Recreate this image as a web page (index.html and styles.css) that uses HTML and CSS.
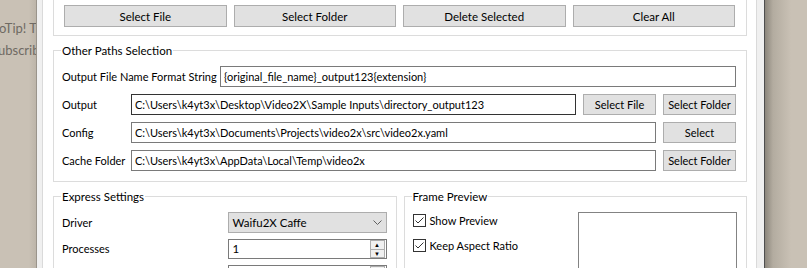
FILE: index.html
```html
<!DOCTYPE html>
<html lang="en">
<head>
    <meta charset="UTF-8">
    <meta name="viewport" content="width=device-width, initial-scale=1.0">
    <title>Video2X</title>
    <link rel="stylesheet" href="styles.css">
</head>
<body>
    <div class="desk">
        <div class="behind">
            <p class="behind-line tip">oTip! The</p>
            <p class="behind-line sub">ubscribe</p>
        </div>

        <div class="window">
            <div class="pane">
                <div class="group group-top">
                    <div class="btn-grid">
                        <button class="btn">Select File</button>
                        <button class="btn">Select Folder</button>
                        <button class="btn">Delete Selected</button>
                        <button class="btn">Clear All</button>
                    </div>
                </div>

                <div class="group paths">
                    <div class="group-title">Other Paths Selection</div>
                    <div class="rows">
                        <div class="row">
                            <span class="label label-wide">Output File Name Format String</span>
                            <input class="field" type="text" value="{original_file_name}_output123{extension}" readonly>
                        </div>
                        <div class="row">
                            <span class="label">Output</span>
                            <input class="field field-active" type="text" value="C:\Users\k4yt3x\Desktop\Video2X\Sample Inputs\directory_output123" readonly>
                            <button class="btn btn-small">Select File</button>
                            <button class="btn btn-small">Select Folder</button>
                        </div>
                        <div class="row">
                            <span class="label">Config</span>
                            <input class="field" type="text" value="C:\Users\k4yt3x\Documents\Projects\video2x\src\video2x.yaml" readonly>
                            <button class="btn btn-small">Select</button>
                        </div>
                        <div class="row">
                            <span class="label">Cache Folder</span>
                            <input class="field" type="text" value="C:\Users\k4yt3x\AppData\Local\Temp\video2x" readonly>
                            <button class="btn btn-small">Select Folder</button>
                        </div>
                    </div>
                </div>

                <div class="bottom">
                    <div class="group express">
                        <div class="group-title">Express Settings</div>
                        <div class="form">
                            <span class="label">Driver</span>
                            <div class="combo">
                                <span>Waifu2X Caffe</span>
                                <svg class="chevron" width="9" height="5" viewBox="0 0 9 5"><polyline points="0.5,0.5 4.5,4.5 8.5,0.5" fill="none" stroke="#606060" stroke-width="1"/></svg>
                            </div>

                            <span class="label">Processes</span>
                            <div class="spin">
                                <span class="spin-value">1</span>
                                <div class="spin-btns">
                                    <span class="spin-btn">&#9650;</span>
                                    <span class="spin-btn">&#9660;</span>
                                </div>
                            </div>

                            <span class="label"></span>
                            <div class="spin">
                                <span class="spin-value"></span>
                                <div class="spin-btns">
                                    <span class="spin-btn">&#9650;</span>
                                    <span class="spin-btn">&#9660;</span>
                                </div>
                            </div>
                        </div>
                    </div>

                    <div class="group preview">
                        <div class="group-title">Frame Preview</div>
                        <div class="form">
                            <div class="checks">
                                <div class="check">
                                    <svg width="13" height="13" viewBox="0 0 13 13"><rect x="0.5" y="0.5" width="12" height="12" fill="#fff" stroke="#333"/><polyline points="2.5,6.5 5,9 10.5,3.5" fill="none" stroke="#333" stroke-width="1"/></svg>
                                    <span>Show Preview</span>
                                </div>
                                <div class="check">
                                    <svg width="13" height="13" viewBox="0 0 13 13"><rect x="0.5" y="0.5" width="12" height="12" fill="#fff" stroke="#333"/><polyline points="2.5,6.5 5,9 10.5,3.5" fill="none" stroke="#333" stroke-width="1"/></svg>
                                    <span>Keep Aspect Ratio</span>
                                </div>
                            </div>
                            <div class="preview-box"></div>
                        </div>
                    </div>
                </div>
            </div>
        </div>

        <div class="outside"></div>
    </div>
</body>
</html>
```

FILE: styles.css
```css
body {
    margin: 0;
    height: 268px;
    overflow: hidden;
    background: #c9c1b5;
    font-family: 'Lato', 'Liberation Sans', sans-serif;
    font-size: 11px;
    color: #000;
}

.desk {
    display: flex;
    height: 268px;
}

.behind {
    width: 36px;
    overflow: hidden;
    padding-top: 18px;
    background: linear-gradient(to right, #c9c1b5 80%, #bdb5a9);
}

.behind-line {
    margin: 0;
    white-space: nowrap;
    font-size: 13px;
    line-height: 20px;
    color: #6f6a63;
}

.tip {
    margin-left: -1px;
}

.sub {
    margin-left: -2px;
    margin-top: 2px;
}

.window {
    width: 729px;
    box-sizing: border-box;
    background: #f0f0f0;
    border-left: 1px solid #9a948b;
    border-right: 1px solid #4e4e4e;
    padding: 0 7px 0 5px;
}

.pane {
    height: 100%;
    background: #fff;
    border-left: 1px solid #dadada;
    border-right: 1px solid #dadada;
    padding: 0 9px 0 10px;
}

.outside {
    flex: 1;
    background: linear-gradient(to right, #8c867c, #b3aca0 8px, #c9c1b5 26px);
}

.group {
    border: 1px solid #dcdcdc;
}

.group-title {
    width: fit-content;
    margin: -8px 0 0 -1px;
    padding: 0 1px;
    line-height: 15px;
    font-size: 11.5px;
    background: #fff;
}

.group-top {
    border-top: none;
    padding: 5px 11px 8px 10px;
}

.btn-grid {
    display: grid;
    grid-template-columns: repeat(4, 1fr);
    gap: 7px;
}

.btn {
    height: 22px;
    margin: 0;
    padding: 0;
    border: 1px solid #adadad;
    background: #e1e1e1;
    font-family: inherit;
    font-size: 11.5px;
    color: #000;
}

.btn-small {
    width: 73px;
    height: 21px;
    flex: none;
    font-size: 11px;
}

.paths {
    margin-top: 14px;
    padding: 0 10px 10px 8px;
}

.rows {
    display: flex;
    flex-direction: column;
    gap: 7px;
    margin-top: 8px;
}

.row {
    display: flex;
    align-items: center;
    gap: 7px;
    height: 21px;
}

.label {
    width: 62px;
    flex: none;
    white-space: nowrap;
}

.label-wide {
    width: 151px;
}

.field {
    flex: 1;
    min-width: 0;
    height: 21px;
    box-sizing: border-box;
    margin: 0;
    padding: 0 3px;
    border: 1px solid #7a7a7a;
    background: #fff;
    font-family: inherit;
    font-size: 11px;
    color: #000;
    outline: none;
}

.field-active {
    border-color: #333;
}

.bottom {
    display: grid;
    grid-template-columns: 1fr 1fr;
    gap: 7px;
    margin-top: 14px;
}

.bottom .group {
    height: 120px;
    padding: 0 9px 0 8px;
}

.form {
    display: grid;
    grid-template-columns: 1fr 159px;
    grid-auto-rows: 21px;
    row-gap: 5px;
    margin-top: 8px;
    align-items: center;
}

.combo {
    height: 21px;
    box-sizing: border-box;
    display: flex;
    align-items: center;
    justify-content: space-between;
    padding: 0 4px 0 4px;
    border: 1px solid #adadad;
    background: #e1e1e1;
    font-size: 11.5px;
}

.spin {
    height: 20px;
    box-sizing: border-box;
    display: flex;
    align-items: center;
    justify-content: space-between;
    padding: 0 1px 0 4px;
    border: 1px solid #7a7a7a;
    background: #fff;
    font-size: 11.5px;
}

.spin-btns {
    display: flex;
    flex-direction: column;
    width: 13px;
    height: 16px;
    border: 1px solid #adadad;
    background: #f0f0f0;
}

.spin-btn {
    flex: 1;
    font-size: 6px;
    line-height: 8px;
    text-align: center;
    color: #000;
}

.spin-btn + .spin-btn {
    border-top: 1px solid #adadad;
}

.checks {
    grid-row: span 3;
    align-self: start;
    display: flex;
    flex-direction: column;
    gap: 8px;
}

.check {
    display: flex;
    align-items: center;
    gap: 4px;
    height: 17px;
}

.check svg {
    flex: none;
}

.preview-box {
    grid-row: span 4;
    align-self: start;
    height: 100px;
    border: 1px solid #838383;
    background: #fff;
}
```
